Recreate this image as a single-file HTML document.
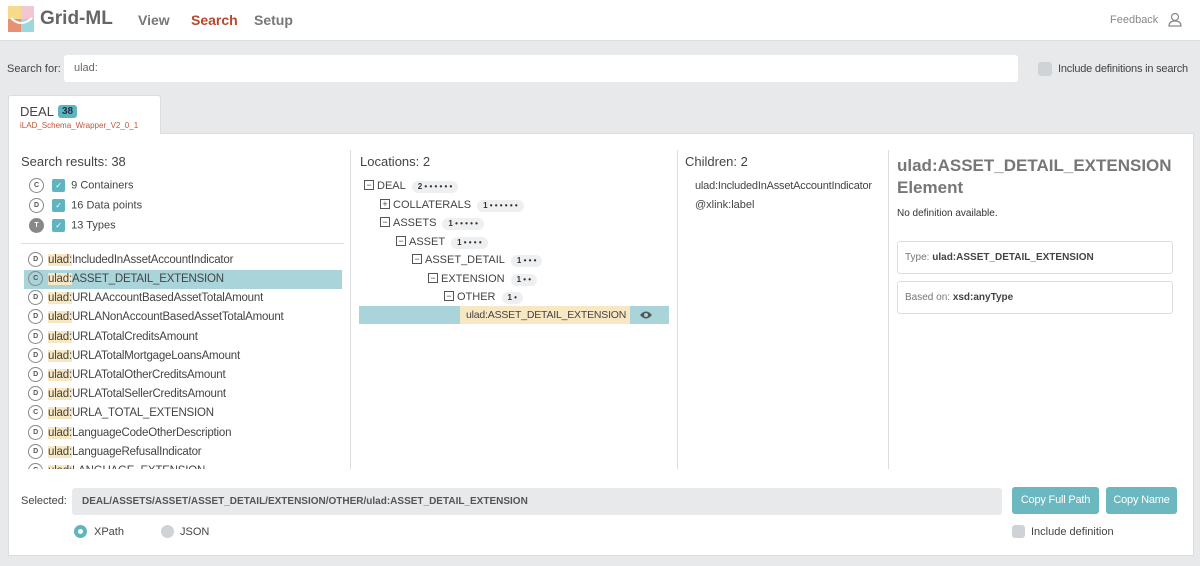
<!DOCTYPE html>
<html><head><meta charset="utf-8"><style>
*{box-sizing:border-box;margin:0;padding:0}
body{width:1200px;height:566px;background:#e8e9eb;font-family:"Liberation Sans",sans-serif;color:#444;position:relative;overflow:hidden;font-size:11px}
.a{position:absolute;white-space:nowrap}
.hdr{left:0;top:0;width:1200px;height:41px;background:#fff;border-bottom:1px solid #dcdde0}
.nav{font-size:14px;font-weight:bold;color:#777;top:12px}
.ci{display:inline-block;width:15px;height:15px;border:1px solid #888;border-radius:50%;font-size:7px;line-height:13px;text-align:center;color:#555;font-weight:bold;vertical-align:middle}
.cb{display:inline-block;width:13px;height:13px;background:#5fb4bf;border-radius:2px;vertical-align:middle;color:#fff;font-size:8px;line-height:13px;text-align:center}
.hl{background:#f7e7c2}
.row{left:24px;width:318px;height:19px;line-height:19px;font-size:11.5px;color:#444;letter-spacing:-0.2px}
.row .ci{margin:0 5px 0 4px}
.tr{font-size:11px;height:18px;line-height:18px;color:#444}
.bx{display:inline-block;width:10px;height:10px;border:1px solid #555;font-size:9px;line-height:8px;text-align:center;vertical-align:middle;margin-right:3px;margin-top:-2px}
.pill{display:inline-block;background:#eeeff1;border-radius:7px;font-size:8px;padding:0 6px;line-height:12px;margin-left:6px;font-weight:bold;color:#333}
.vl{top:150px;width:1px;height:319px;background:#dcdde0}
</style></head><body>
<div class="a hdr"></div>
<svg class="a" style="left:8px;top:6px" width="26" height="26" viewBox="0 0 26 26"><rect x="0" y="0" width="13" height="13" fill="#f6d98a"/><rect x="13" y="0" width="13" height="13" fill="#f2c7d2"/><rect x="0" y="13" width="13" height="13" fill="#e89073"/><rect x="13" y="13" width="13" height="13" fill="#9fd6dd"/><path d="M3 12 Q13 22 24 12" stroke="#fff" stroke-width="2" fill="none"/></svg>
<div class="a" style="left:40px;top:8px;font-size:19px;font-weight:bold;color:#666">Grid-ML</div>
<div class="a nav" style="left:138px">View</div>
<div class="a nav" style="left:191px;color:#b8472e">Search</div>
<div class="a nav" style="left:254px">Setup</div>
<div class="a" style="left:1110px;top:14px;font-size:11px;color:#888">Feedback</div>
<svg class="a" style="left:1168px;top:12px" width="14" height="15" viewBox="0 0 14 15"><circle cx="7" cy="5" r="3.5" fill="none" stroke="#888" stroke-width="1.2"/><path d="M1 14 Q1 9 7 9 Q13 9 13 14 Z" fill="none" stroke="#888" stroke-width="1.2"/></svg>

<div class="a" style="left:7px;top:63px;font-size:11px;color:#444">Search for:</div>
<div class="a" style="left:64px;top:55px;width:954px;height:27px;background:#fff;border-radius:3px;padding-left:10px;line-height:27px;font-size:11px;color:#666">ulad:</div>
<div class="a" style="left:1038px;top:62px;width:14px;height:14px;background:#cfd2d6;border-radius:3px"></div>
<div class="a" style="left:1058px;top:63px;font-size:11px;color:#444;letter-spacing:-0.2px">Include definitions in search</div>

<div class="a" style="left:8px;top:95px;width:153px;height:40px;background:#fff;border:1px solid #dcdde0;border-bottom:none;border-radius:3px 3px 0 0"></div>
<div class="a" style="left:8px;top:133px;width:1186px;height:423px;background:#fff;border:1px solid #dcdde0"></div>
<div class="a" style="left:9px;top:131px;width:151px;height:4px;background:#fff"></div>
<div class="a" style="left:20px;top:104px;font-size:13px;color:#444">DEAL</div>
<div class="a" style="left:58px;top:105px;background:#5fb4bf;color:#234;font-size:10px;font-weight:bold;border-radius:3px;padding:1px 4px">38</div>
<div class="a" style="left:20px;top:121px;font-size:8px;color:#c0573a">iLAD_Schema_Wrapper_V2_0_1</div>

<div class="a" style="left:21px;top:154px;font-size:13px;color:#444">Search results: 38</div>
<div class="a" style="left:29px;top:178px;font-size:11px"><span class="ci">C</span> <span class="cb" style="margin-left:5px">✓</span>&nbsp; 9 Containers</div>
<div class="a" style="left:29px;top:198px;font-size:11px"><span class="ci">D</span> <span class="cb" style="margin-left:5px">✓</span>&nbsp; 16 Data points</div>
<div class="a" style="left:29px;top:218px;font-size:11px"><span class="ci" style="background:#888;color:#fff;border-color:#888">T</span> <span class="cb" style="margin-left:5px">✓</span>&nbsp; 13 Types</div>
<div class="a" style="left:21px;top:243px;width:323px;height:1px;background:#dcdde0"></div>
<div class="a" style="left:24px;top:251px;width:320px;height:218px;overflow:hidden">
<div style="position:relative">
<div class="a row" style="left:0;top:0"><span class="ci">D</span><span class="hl">ulad:</span>IncludedInAssetAccountIndicator</div>
<div class="a row" style="left:0;top:19px;background:#a9d4da"><span class="ci">C</span><span class="hl">ulad:</span>ASSET_DETAIL_EXTENSION</div>
<div class="a row" style="left:0;top:38px"><span class="ci">D</span><span class="hl">ulad:</span>URLAAccountBasedAssetTotalAmount</div>
<div class="a row" style="left:0;top:57px"><span class="ci">D</span><span class="hl">ulad:</span>URLANonAccountBasedAssetTotalAmount</div>
<div class="a row" style="left:0;top:77px"><span class="ci">D</span><span class="hl">ulad:</span>URLATotalCreditsAmount</div>
<div class="a row" style="left:0;top:96px"><span class="ci">D</span><span class="hl">ulad:</span>URLATotalMortgageLoansAmount</div>
<div class="a row" style="left:0;top:115px"><span class="ci">D</span><span class="hl">ulad:</span>URLATotalOtherCreditsAmount</div>
<div class="a row" style="left:0;top:134px"><span class="ci">D</span><span class="hl">ulad:</span>URLATotalSellerCreditsAmount</div>
<div class="a row" style="left:0;top:153px"><span class="ci">C</span><span class="hl">ulad:</span>URLA_TOTAL_EXTENSION</div>
<div class="a row" style="left:0;top:173px"><span class="ci">D</span><span class="hl">ulad:</span>LanguageCodeOtherDescription</div>
<div class="a row" style="left:0;top:192px"><span class="ci">D</span><span class="hl">ulad:</span>LanguageRefusalIndicator</div>
<div class="a row" style="left:0;top:211px"><span class="ci">C</span><span class="hl">ulad:</span>LANGUAGE_EXTENSION</div>
</div></div>

<div class="a vl" style="left:350px"></div>
<div class="a vl" style="left:677px"></div>
<div class="a vl" style="left:888px"></div>

<div class="a" style="left:360px;top:154px;font-size:13px;color:#444">Locations: 2</div>
<div class="a tr" style="left:364px;top:177px"><span class="bx">−</span>DEAL<span class="pill">2 • • • • • •</span></div>
<div class="a tr" style="left:380px;top:196px"><span class="bx">+</span>COLLATERALS<span class="pill">1 • • • • • •</span></div>
<div class="a tr" style="left:380px;top:214px"><span class="bx">−</span>ASSETS<span class="pill">1 • • • • •</span></div>
<div class="a tr" style="left:396px;top:233px"><span class="bx">−</span>ASSET<span class="pill">1 • • • •</span></div>
<div class="a tr" style="left:412px;top:251px"><span class="bx">−</span>ASSET_DETAIL<span class="pill">1 • • •</span></div>
<div class="a tr" style="left:428px;top:270px"><span class="bx">−</span>EXTENSION<span class="pill">1 • •</span></div>
<div class="a tr" style="left:444px;top:288px"><span class="bx">−</span>OTHER<span class="pill">1 •</span></div>
<div class="a" style="left:359px;top:306px;width:310px;height:18px;background:#a9d4da"></div>
<div class="a" style="left:460px;top:306px;width:170px;height:18px;background:#f7e7c2;line-height:18px;padding-left:6px;font-size:10.5px;color:#444;letter-spacing:-0.2px;overflow:hidden">ulad:ASSET_DETAIL_EXTENSION</div>
<svg class="a" style="left:639px;top:310px" width="14" height="10" viewBox="0 0 14 10"><path d="M1 5 Q7 -2 13 5 Q7 12 1 5Z" fill="#555"/><circle cx="7" cy="5" r="2" fill="#a9d4da"/></svg>

<div class="a" style="left:685px;top:154px;font-size:13px;color:#444">Children: 2</div>
<div class="a" style="left:695px;top:180px;font-size:11px;color:#444;letter-spacing:-0.2px">ulad:IncludedInAssetAccountIndicator</div>
<div class="a" style="left:695px;top:199px;font-size:11px;color:#444">@xlink:label</div>

<div class="a" style="left:897px;top:155px;font-size:17px;font-weight:bold;color:#777;line-height:22px;white-space:normal;width:290px">ulad:ASSET_DETAIL_EXTENSION Element</div>
<div class="a" style="left:897px;top:208px;font-size:10px;color:#333">No definition available.</div>
<div class="a" style="left:897px;top:241px;width:276px;height:33px;border:1px solid #dcdde0;border-radius:3px;padding-left:7px;line-height:31px;font-size:10px;color:#777">Type: <b style="color:#444">ulad:ASSET_DETAIL_EXTENSION</b></div>
<div class="a" style="left:897px;top:281px;width:276px;height:33px;border:1px solid #dcdde0;border-radius:3px;padding-left:7px;line-height:31px;font-size:10px;color:#777">Based on: <b style="color:#444">xsd:anyType</b></div>

<div class="a" style="left:21px;top:495px;font-size:11px;color:#444">Selected:</div>
<div class="a" style="left:72px;top:488px;width:930px;height:27px;background:#e8e9eb;border-radius:3px;padding-left:10px;line-height:27px;font-size:10px;font-weight:bold;color:#555">DEAL/ASSETS/ASSET/ASSET_DETAIL/EXTENSION/OTHER/ulad:ASSET_DETAIL_EXTENSION</div>
<div class="a" style="left:1012px;top:487px;width:87px;height:27px;background:#6bb8c1;border-radius:3px;color:#fff;font-size:11px;line-height:27px;text-align:center;letter-spacing:-0.2px">Copy Full Path</div>
<div class="a" style="left:1106px;top:487px;width:71px;height:27px;background:#6bb8c1;border-radius:3px;color:#fff;font-size:11px;line-height:27px;text-align:center;letter-spacing:-0.2px">Copy Name</div>
<div class="a" style="left:74px;top:525px;width:13px;height:13px;border-radius:50%;border:4px solid #5fb4bf;background:#fff"></div>
<div class="a" style="left:94px;top:526px;font-size:11px;color:#444">XPath</div>
<div class="a" style="left:161px;top:525px;width:13px;height:13px;border-radius:50%;background:#cfd2d6"></div>
<div class="a" style="left:180px;top:526px;font-size:11px;color:#444">JSON</div>
<div class="a" style="left:1012px;top:525px;width:13px;height:13px;border-radius:3px;background:#cfd2d6"></div>
<div class="a" style="left:1031px;top:526px;font-size:11px;color:#444">Include definition</div>
</body></html>
